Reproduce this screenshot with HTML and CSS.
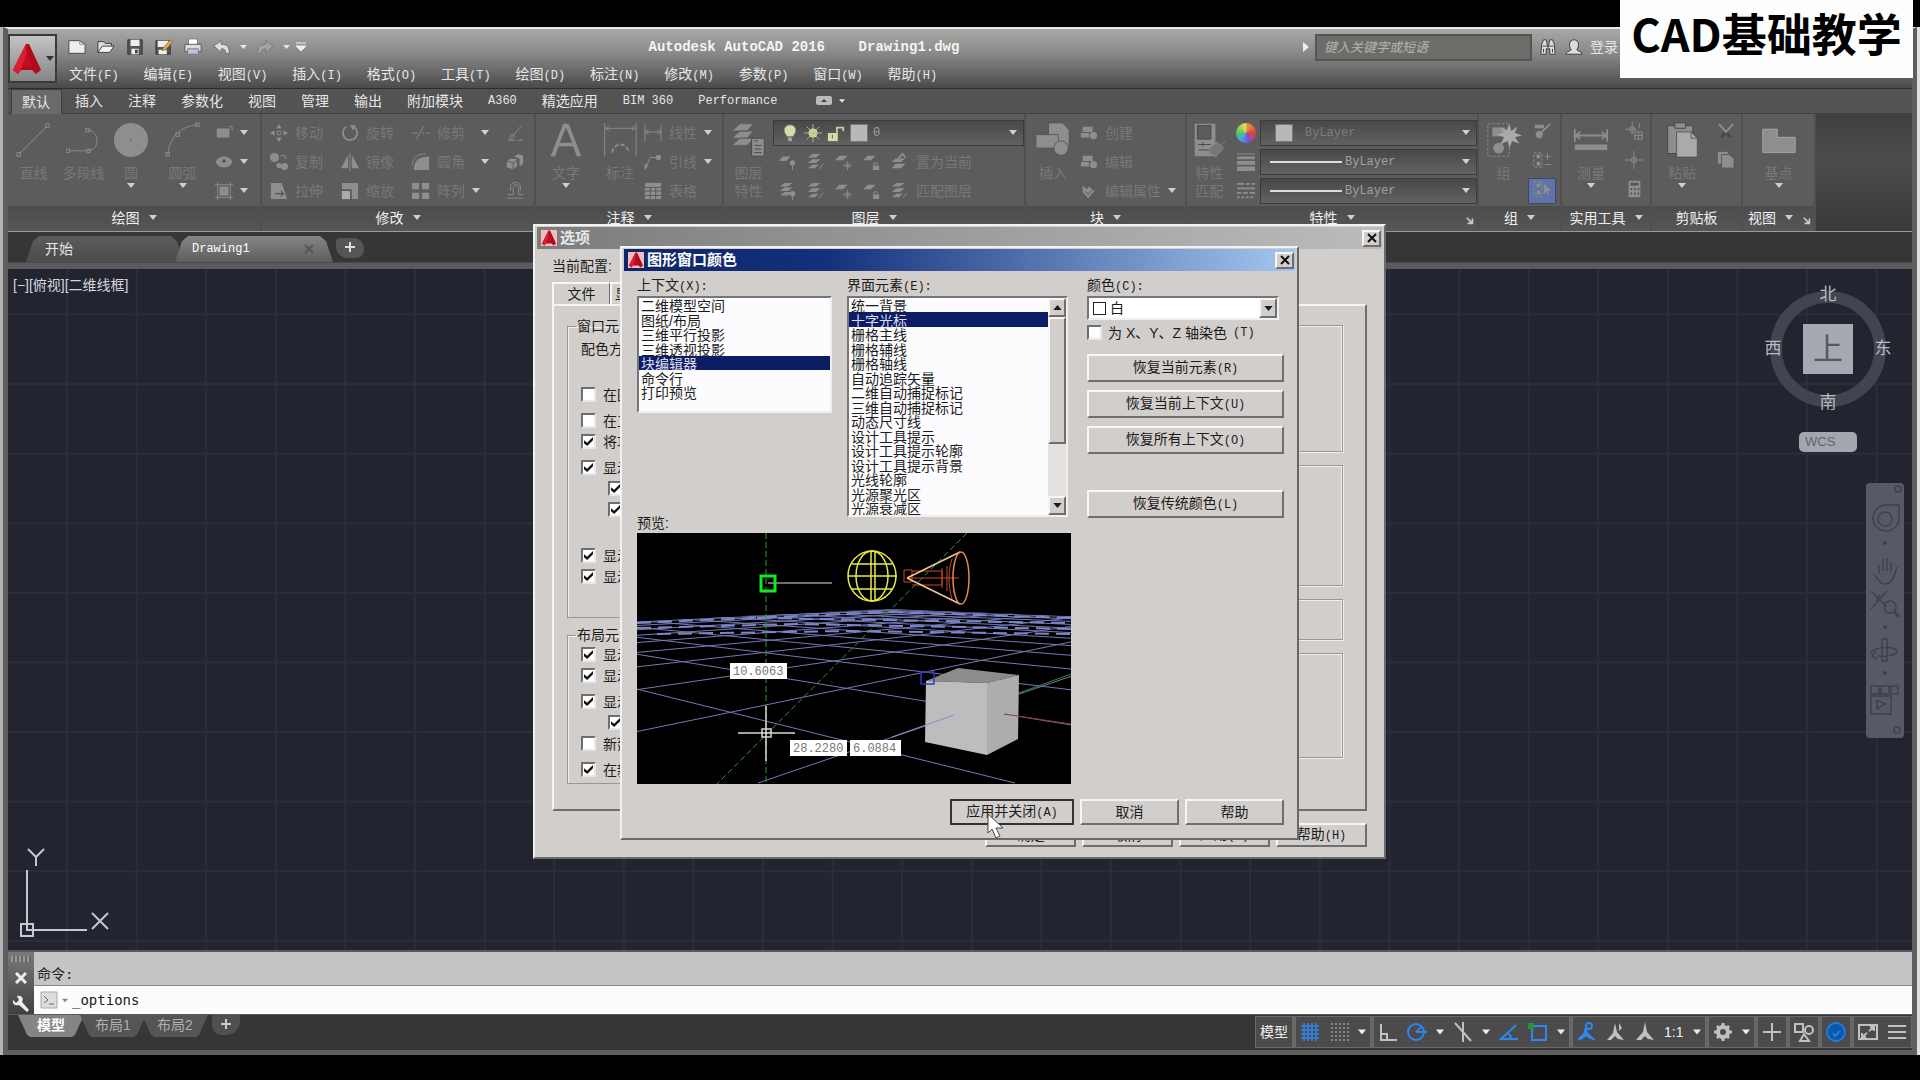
FILE: index.html
```html
<!DOCTYPE html>
<html lang="zh-CN">

<head>
    <meta charset="UTF-8">
    <meta name="viewport" content="width=device-width, initial-scale=1.0">
    <title>Autodesk AutoCAD 2016 - Drawing1.dwg</title>
    <link rel="stylesheet" href="styles.css">
</head>

<body>
    <!-- icon sprite -->
    <svg class="sprite" aria-hidden="true">
        <symbol id="down" viewBox="0 0 10 6"><path d="M0 0h10L5 6z" fill="currentColor"/></symbol>
        <symbol id="logo" viewBox="0 0 30 32"><path d="M14 1L1 27l5 4 3-4h11l4 4 5-4L17 1z" fill="#b3091d"/><path d="M14 1L1 27l5 4 9-14z" fill="#d81f34"/><path d="M15 9l-5 14h10z" fill="#c10e22"/></symbol>
        <symbol id="new" viewBox="0 0 20 20"><path d="M1 3h12l6 4v10H1z" fill="#eee" stroke="#444"/><path d="M13 3v4h6" fill="none" stroke="#888"/></symbol>
        <symbol id="open" viewBox="0 0 20 20"><path d="M1 16V4h6l2 2h7v3" fill="#ddd" stroke="#333"/><path d="M1 16l5-7h13l-5 7z" fill="#f4f4f4" stroke="#333"/></symbol>
        <symbol id="save" viewBox="0 0 20 20"><path d="M2 2h16v16H2z" fill="#555" stroke="#333"/><path d="M5 2h10v7H5zM6 12h8v6H6z" fill="#eee"/><path d="M10 13h3v4h-3z" fill="#444"/></symbol>
        <symbol id="saveas" viewBox="0 0 20 20"><path d="M1 3h16v15H1z" fill="#555" stroke="#333"/><path d="M3 3h12v7H3zM4 13h9v5H4z" fill="#eee"/><path d="M9 11l8-9 3 2-8 9-4 1z" fill="#e9a645" stroke="#555" stroke-width=".6"/></symbol>
        <symbol id="print" viewBox="0 0 20 20"><path d="M5 1h10v7H5z" fill="#fff" stroke="#777"/><path d="M1 7h18v8H1z" fill="#ddd" stroke="#555"/><path d="M4 12h12v6H4z" fill="#bcc4dd" stroke="#777"/></symbol>
        <symbol id="undo" viewBox="0 0 20 20"><path d="M1 9l8-6v4c7 0 9 3 9 10h-4c0-4-1-5-5-5v4z" fill="#ddd" stroke="#555" stroke-width=".7"/></symbol>
        <symbol id="redo" viewBox="0 0 20 20"><path d="M19 9l-8-6v4c-7 0-9 3-9 10h4c0-4 1-5 5-5v4z" fill="#a4a4a4" stroke="#6a6a6a" stroke-width=".7"/></symbol>
        <symbol id="more" viewBox="0 0 10 10"><path d="M0 1h10M0 4h10L5 9z" fill="#eee" stroke="#eee"/></symbol>
        <symbol id="find" viewBox="0 0 20 20"><path d="M3 7l2-5h3l1 5v3h2V7l1-5h3l2 5 1 11h-6v-6H8v6H2z" fill="#ddd" stroke="#333"/><path d="M4 9h4M12 9h4M5 12v4M15 12v4" stroke="#333" fill="none"/></symbol>
        <symbol id="user" viewBox="0 0 20 20"><path d="M1 18c0-3 4-3 6-5-3-3-3-11 3-11s6 8 3 11c2 2 6 2 6 5z" fill="#ddd" stroke="#333"/></symbol>
        <symbol id="panelbox" viewBox="0 0 18 12"><rect x="1" y="1" width="16" height="9" rx="2" fill="#bbb"/><path d="M6 7l3-3 3 3z" fill="#444"/></symbol>

        <symbol id="line" viewBox="0 0 40 40"><path d="M4 35L34 5" class="s"/><path d="M1 34h4v4H1zM33 2h4v4h-4z" class="s"/></symbol>
        <symbol id="pline" viewBox="0 0 40 40"><path d="M4 32h20c14 0 14-22 0-23" class="s"/><path d="M0 30h4v4H0zM23 30h4v4h-4zM22 7h4v4h-4z" class="s"/></symbol>
        <symbol id="circle" viewBox="0 0 40 40"><circle cx="20" cy="20" r="19" class="f"/><path d="M18 20h4M20 18v4" stroke="#777"/></symbol>
        <symbol id="arc" viewBox="0 0 40 40"><path d="M3 36C6 16 16 5 37 3" class="s"/><path d="M1 34h4v4H1zM12 12h4v4h-4zM34 1h4v4h-4z" class="s"/></symbol>
        <symbol id="rect" viewBox="0 0 20 20"><path d="M2 5h14v10H2z" class="f"/><path d="M15 3h4v4" class="s"/></symbol>
        <symbol id="ellipse" viewBox="0 0 20 20"><ellipse cx="10" cy="10" rx="9" ry="6" class="f"/><circle cx="10" cy="9" r="2" fill="#555"/></symbol>
        <symbol id="hatch" viewBox="0 0 20 20"><path d="M5 5h10v10H5z" class="f"/><path d="M0 3h20M0 17h20M3 0v20M17 0v20" class="s"/></symbol>
        <symbol id="move" viewBox="0 0 20 20"><path d="M10 0l3 5H7zM10 20l3-5H7zM0 10l5 3V7zM20 10l-5 3V7z" class="f"/><path d="M8 8h4v4H8z" class="s"/></symbol>
        <symbol id="rotate" viewBox="0 0 20 20"><path d="M6 3a8 8 0 1 0 8 0" class="s w"/><path d="M10 1l7 1-4 5z" class="f"/></symbol>
        <symbol id="trim" viewBox="0 0 20 20"><path d="M0 10h6M11 10h3M16 10h4M5 17L13 2" class="s"/></symbol>
        <symbol id="copy" viewBox="0 0 20 20"><circle cx="5" cy="5" r="5" class="f"/><circle cx="10" cy="14" r="3" class="f"/><circle cx="16" cy="15" r="4" class="f"/><path d="M12 3h5v4" class="s"/></symbol>
        <symbol id="mirror" viewBox="0 0 20 20"><path d="M8 2v15H0zM12 2v15h8z" class="f"/><path d="M10 0v20" class="s"/></symbol>
        <symbol id="fillet" viewBox="0 0 20 20"><path d="M2 19C2 8 8 4 19 4v15z" class="f"/><path d="M0 14C1 5 6 1 15 1" class="s"/></symbol>
        <symbol id="stretch" viewBox="0 0 20 20"><path d="M1 1h12l6 18H1z" class="f"/><path d="M6 13h9M12 10l3 3-3 3" stroke="#333" fill="none"/></symbol>
        <symbol id="scale" viewBox="0 0 20 20"><path d="M1 1h18v18h-7V8H1z" class="f"/><path d="M1 10h9v9H1z" fill="#aaa"/></symbol>
        <symbol id="array" viewBox="0 0 20 20"><path d="M0 1h8v7H0zM11 1h8v7h-8zM0 12h8v7H0zM11 12h8v7h-8z" class="f"/></symbol>
        <symbol id="erase" viewBox="0 0 20 20"><path d="M7 14L17 2M2 18h8M12 18h7M7 11l3 3-3 3-3-2z" class="s"/></symbol>
        <symbol id="explode" viewBox="0 0 20 20"><path d="M1 9l4-3 7 1v8l-4 3-7-2zM9 4l5-3 5 2v9l-4 3V6z" class="f"/><path d="M1 9l7 2v7M8 11l4-3" stroke="#555" fill="none"/></symbol>
        <symbol id="offset" viewBox="0 0 20 20"><path d="M1 18h18M2 14h6V6c0-4 6-4 6 0v8h5M5 10V5c0-6 11-6 11 0v5" class="s"/></symbol>
        <symbol id="bigA" viewBox="0 0 40 40"><path d="M3 38L17 2h6l14 36h-5l-4-11H12L8 38zm10-15h14L20 6z" class="f"/></symbol>
        <symbol id="dim" viewBox="0 0 40 40"><path d="M3 1v37M38 1v37M4 7h33M8 4L4 7l4 3M33 4l4 3-4 3" class="s"/><path d="M11 34c3-12 16-12 19 0" class="s w" stroke-dasharray="5 2"/></symbol>
        <symbol id="linear" viewBox="0 0 20 20"><path d="M1 1v18M19 1v18M1 9h18M5 6L1 9l4 3M15 6l4 3-4 3" class="s"/></symbol>
        <symbol id="leader" viewBox="0 0 20 20"><path d="M1 18l6-13h7" class="s"/><circle cx="16" cy="5" r="3" class="f"/><path d="M0 19l1-7 4 2z" class="f"/></symbol>
        <symbol id="grid" viewBox="0 0 20 20"><path d="M1 1h18v18H1z" class="f"/><path d="M1 6h18M1 10h18M1 15h18M7 6v13M13 6v13" stroke="#555" fill="none"/></symbol>
        <symbol id="layers" viewBox="0 0 40 40"><path d="M10 2h15l-7 8H1zM10 10h15l-7 8H1zM10 18h15l-7 8H1z" class="f" stroke="#5c5c5c"/><path d="M23 18h14v20H23z" class="f" stroke="#444"/><path d="M26 21h4M26 26h8M26 30h8M26 34h8" stroke="#444"/></symbol>
        <symbol id="lay1" viewBox="0 0 20 20"><path d="M4 4h9l-5 5H0z" class="f"/><circle cx="15" cy="11" r="3" class="f"/><path d="M15 13v6" class="s"/></symbol>
        <symbol id="lay2" viewBox="0 0 20 20"><path d="M6 1h9l-5 4H1zM6 7h9l-5 4H1zM6 13h7l-4 4H1z" class="f"/><path d="M13 18l5-6" class="s"/></symbol>
        <symbol id="lay3" viewBox="0 0 20 20"><path d="M5 3h9l-5 5H0z" class="f"/><path d="M14 9v10M9 14h10M11 11l6 6M17 11l-6 6" class="s"/></symbol>
        <symbol id="lay4" viewBox="0 0 20 20"><path d="M5 3h9l-5 5H0zM11 14h7v5h-7z" class="f"/><path d="M12 14v-3h4v3" class="s"/></symbol>
        <symbol id="lay5" viewBox="0 0 20 20"><path d="M6 1h9l-5 4H1zM6 6h9l-5 4H1zM6 11h9l-5 4H1z" class="f"/><circle cx="15" cy="13" r="3" class="f"/><path d="M15 15v5" class="s"/></symbol>
        <symbol id="lay6" viewBox="0 0 20 20"><path d="M5 6h11l-5 4H1zM5 12h11l-5 5H1z" class="f"/><path d="M8 6l5-5 3 4" class="s w"/></symbol>
        <symbol id="bulb" viewBox="0 0 20 20"><path d="M7 14C1 7 4 1 10 1s9 6 3 13z" fill="#d9dba4" stroke="#888"/><path d="M8 15h4v4H8z" fill="#aaa"/></symbol>
        <symbol id="sun" viewBox="0 0 20 20"><circle cx="10" cy="10" r="5" fill="#d9dba4"/><path d="M10 0v20M0 10h20M3 3l14 14M17 3L3 17" stroke="#b9bb8a"/></symbol>
        <symbol id="lock" viewBox="0 0 20 20"><path d="M1 10h11v9H1z" fill="#d9dba4"/><path d="M11 10V4h7v4" fill="none" stroke="#c9c9a0" stroke-width="2"/><path d="M6 12v4" stroke="#555"/></symbol>
        <symbol id="insert" viewBox="0 0 40 40"><path d="M15 1h16l7 8v20H15z" class="f" stroke="#555"/><path d="M1 14h25v15H1z" class="f" stroke="#555"/><circle cx="29" cy="29" r="8" class="f" stroke="#555"/></symbol>
        <symbol id="block" viewBox="0 0 20 20"><path d="M3 3h11v6H3zM1 10h9v5H1z" class="f"/><circle cx="15" cy="13" r="4" class="f"/></symbol>
        <symbol id="attr" viewBox="0 0 20 20"><path d="M3 4l5 4 2-3 6 5-7 8-6-7z" class="f"/><path d="M6 10l3 4 7-8" stroke="#555" fill="none"/></symbol>
        <symbol id="match" viewBox="0 0 40 40"><path d="M3 2h23v36H3z" class="f"/><path d="M6 4h15v15H6z" fill="#5c5c5c" stroke="#444"/><path d="M7 25h14M7 31h14M12 22v5" stroke="#444"/><path d="M20 29l8-7 7 7-9 10-7-5zM32 26l5-5" fill="#777" stroke="#888"/></symbol>
        <symbol id="lweight" viewBox="0 0 20 20"><path d="M0 1h20" class="s"/><path d="M0 4h20v3H0zM0 9h20v4H0zM0 15h20v5H0z" class="f"/></symbol>
        <symbol id="ltype" viewBox="0 0 20 20"><path d="M0 2h8M10 2h4M16 2h4M0 7h20M0 12h5M7 12h5M14 12h6M0 17h3M5 17h3M10 17h3M15 17h3" class="s w"/></symbol>
        <symbol id="group" viewBox="0 0 40 40"><path d="M2 2h24v36H2z" class="s" stroke-dasharray="3 2"/><path d="M7 6h14v10H7z" class="f"/><circle cx="14" cy="29" r="6" class="f"/><path d="M26 2l2 8 7-5-3 7 8 3-8 2 5 7-8-3-3 8-2-8-8 4 4-8-8-3 8-2-4-6 7 3z" fill="#aaa"/></symbol>
        <symbol id="gedit" viewBox="0 0 20 20"><path d="M2 3h10v4H2z" class="f"/><circle cx="7" cy="14" r="4" class="f"/><path d="M10 11l9-9" class="s w"/></symbol>
        <symbol id="gplus" viewBox="0 0 20 20"><path d="M1 2h9v16H1z" class="s" stroke-dasharray="3 2"/><path d="M4 4h4v4H4zM4 12h4v4H4z" class="f"/><path d="M13 6h7M16 2v8M13 15h7" class="s"/></symbol>
        <symbol id="gsel" viewBox="0 0 20 20"><path d="M1 2h9v16H1z" class="s" stroke-dasharray="3 2"/><path d="M4 4h4v4H4zM4 12h4v4H4z" class="f"/><path d="M12 4v12l3-3 2 4 1-1-2-4h4z" class="f"/></symbol>
        <symbol id="measure" viewBox="0 0 40 40"><path d="M2 8v14M38 8v14M3 15h34M8 11l-5 4 5 4M32 11l5 4-5 4" class="s w"/><path d="M2 25h36v6H2z" class="f"/></symbol>
        <symbol id="point" viewBox="0 0 20 20"><path d="M10 0v20M0 10h20" class="s"/><circle cx="10" cy="10" r="3" class="s"/></symbol>
        <symbol id="qsel" viewBox="0 0 20 20"><path d="M8 0v14M0 8h13" class="s"/><circle cx="8" cy="8" r="3" class="s"/><path d="M11 11h8v8h-8zM15 11v8M11 15h8M16 1v6" class="s"/></symbol>
        <symbol id="calc" viewBox="0 0 20 20"><path d="M4 1h13v18H4z" class="f"/><path d="M6 3h9v3H6zM6 9h2v2H6zM10 9h2v2h-2zM14 9h2v2h-2zM6 14h2v2H6zM10 14h2v2h-2zM14 14h2v2h-2z" fill="#555"/></symbol>
        <symbol id="paste" viewBox="0 0 40 40"><path d="M4 4h28v31H4z" class="f" stroke="#444"/><path d="M12 1h12v6H12z" class="f" stroke="#444"/><path d="M14 11h16l7 7v21H14z" fill="#aaa" stroke="#555"/><path d="M30 11v7h7" fill="none" stroke="#555"/></symbol>
        <symbol id="cut" viewBox="0 0 20 20"><path d="M2 2l9 10M18 2L9 12" class="s w"/><path d="M11 12l4 5M9 12l-4 5" stroke="#484848" stroke-width="3"/></symbol>
        <symbol id="docs" viewBox="0 0 20 20"><path d="M1 1h11v13H1z" class="f"/><path d="M5 4h9l5 5v10H5z" class="f" stroke="#555"/></symbol>
        <symbol id="base" viewBox="0 0 40 40"><path d="M2 8h16v9h20v17H2z" class="f" stroke="#aaa"/></symbol>
        <symbol id="launch" viewBox="0 0 10 10"><path d="M1 1l7 7M8 2v6H2" fill="none" stroke="#ccc" stroke-width="2"/></symbol>
    </svg>

    <main class="app">
        <header class="titlebar">
            <button class="app-button" aria-label="应用程序菜单">
                <svg width="30" height="32"><use href="#logo"/></svg>
                <svg width="8" height="5"><use href="#down"/></svg>
            </button>
            <div class="title-rows">
                <div class="title-row">
                    <div class="quick">
                        <button aria-label="新建"><svg><use href="#new"/></svg></button>
                        <button aria-label="打开"><svg><use href="#open"/></svg></button>
                        <button aria-label="保存"><svg><use href="#save"/></svg></button>
                        <button aria-label="另存为"><svg><use href="#saveas"/></svg></button>
                        <button aria-label="打印"><svg><use href="#print"/></svg></button>
                        <button aria-label="放弃"><svg><use href="#undo"/></svg></button>
                        <button class="slim" aria-label="放弃列表"><svg><use href="#down"/></svg></button>
                        <button aria-label="重做"><svg><use href="#redo"/></svg></button>
                        <button class="slim" aria-label="重做列表"><svg><use href="#down"/></svg></button>
                        <button class="slim" aria-label="自定义"><svg class="tall"><use href="#more"/></svg></button>
                    </div>
                    <h1>Autodesk AutoCAD 2016    Drawing1.dwg</h1>
                    <div class="info">
                        <svg width="6" height="10"><path d="M0 0l6 5-6 5z" fill="#eee"/></svg>
                        <input type="text" placeholder="键入关键字或短语" aria-label="搜索">
                        <button aria-label="查找"><svg><use href="#find"/></svg></button>
                        <button><svg><use href="#user"/></svg>登录</button>
                    </div>
                </div>
                <nav class="menu">
                    <a href="#">文件<span>(F)</span></a>
                    <a href="#">编辑<span>(E)</span></a>
                    <a href="#">视图<span>(V)</span></a>
                    <a href="#">插入<span>(I)</span></a>
                    <a href="#">格式<span>(O)</span></a>
                    <a href="#">工具<span>(T)</span></a>
                    <a href="#">绘图<span>(D)</span></a>
                    <a href="#">标注<span>(N)</span></a>
                    <a href="#">修改<span>(M)</span></a>
                    <a href="#">参数<span>(P)</span></a>
                    <a href="#">窗口<span>(W)</span></a>
                    <a href="#">帮助<span>(H)</span></a>
                </nav>
            </div>
        </header>

        <nav class="ribbon-tabs">
            <a class="active" href="#">默认</a>
            <a href="#">插入</a>
            <a href="#">注释</a>
            <a href="#">参数化</a>
            <a href="#">视图</a>
            <a href="#">管理</a>
            <a href="#">输出</a>
            <a href="#">附加模块</a>
            <a href="#" class="latin">A360</a>
            <a href="#">精选应用</a>
            <a href="#" class="latin">BIM 360</a>
            <a href="#" class="latin">Performance</a>
            <button aria-label="最小化面板">
                <svg width="18" height="12"><use href="#panelbox"/></svg>
                <svg width="6" height="4"><use href="#down"/></svg>
            </button>
        </nav>

        <div class="ribbon">
            <section class="panel draw">
                <div class="panel-body">
                    <button class="big"><svg><use href="#line"/></svg>直线</button>
                    <button class="big"><svg><use href="#pline"/></svg>多段线</button>
                    <button class="big"><svg><use href="#circle"/></svg>圆<svg class="arrow"><use href="#down"/></svg></button>
                    <button class="big"><svg><use href="#arc"/></svg>圆弧<svg class="arrow"><use href="#down"/></svg></button>
                    <div class="stack">
                        <button class="cmd" aria-label="矩形"><svg><use href="#rect"/></svg><svg class="arrow"><use href="#down"/></svg></button>
                        <button class="cmd" aria-label="椭圆"><svg><use href="#ellipse"/></svg><svg class="arrow"><use href="#down"/></svg></button>
                        <button class="cmd" aria-label="图案填充"><svg><use href="#hatch"/></svg><svg class="arrow"><use href="#down"/></svg></button>
                    </div>
                </div>
                <h2>绘图<svg class="arrow"><use href="#down"/></svg></h2>
            </section>

            <section class="panel modify">
                <div class="panel-body">
                    <div class="stack">
                        <button class="cmd"><svg><use href="#move"/></svg>移动</button>
                        <button class="cmd"><svg><use href="#copy"/></svg>复制</button>
                        <button class="cmd"><svg><use href="#stretch"/></svg>拉伸</button>
                    </div>
                    <div class="stack">
                        <button class="cmd"><svg><use href="#rotate"/></svg>旋转</button>
                        <button class="cmd"><svg><use href="#mirror"/></svg>镜像</button>
                        <button class="cmd"><svg><use href="#scale"/></svg>缩放</button>
                    </div>
                    <div class="stack">
                        <button class="cmd wide"><svg><use href="#trim"/></svg>修剪<svg class="arrow"><use href="#down"/></svg></button>
                        <button class="cmd wide"><svg><use href="#fillet"/></svg>圆角<svg class="arrow"><use href="#down"/></svg></button>
                        <button class="cmd"><svg><use href="#array"/></svg>阵列<svg class="arrow"><use href="#down"/></svg></button>
                    </div>
                    <div class="stack">
                        <button class="cmd" aria-label="删除"><svg><use href="#erase"/></svg></button>
                        <button class="cmd" aria-label="分解"><svg><use href="#explode"/></svg></button>
                        <button class="cmd" aria-label="偏移"><svg><use href="#offset"/></svg></button>
                    </div>
                </div>
                <h2>修改<svg class="arrow"><use href="#down"/></svg></h2>
            </section>

            <section class="panel annotate">
                <div class="panel-body">
                    <button class="big"><svg><use href="#bigA"/></svg>文字<svg class="arrow"><use href="#down"/></svg></button>
                    <button class="big"><svg><use href="#dim"/></svg>标注</button>
                    <div class="stack">
                        <button class="cmd"><svg><use href="#linear"/></svg>线性<svg class="arrow"><use href="#down"/></svg></button>
                        <button class="cmd"><svg><use href="#leader"/></svg>引线<svg class="arrow"><use href="#down"/></svg></button>
                        <button class="cmd"><svg><use href="#grid"/></svg>表格</button>
                    </div>
                </div>
                <h2>注释<svg class="arrow"><use href="#down"/></svg></h2>
            </section>

            <section class="panel layer">
                <div class="panel-body">
                    <button class="big"><svg><use href="#layers"/></svg>图层<br>特性</button>
                    <div class="stack">
                        <div class="combo">
                            <svg><use href="#bulb"/></svg>
                            <svg><use href="#sun"/></svg>
                            <svg><use href="#lock"/></svg>
                            <i class="swatch"></i>
                            <select aria-label="图层"><option>0</option></select>
                            <svg class="arrow"><use href="#down"/></svg>
                        </div>
                        <div class="icon-row">
                            <button aria-label="关"><svg><use href="#lay1"/></svg></button>
                            <button aria-label="隔离"><svg><use href="#lay2"/></svg></button>
                            <button aria-label="冻结"><svg><use href="#lay3"/></svg></button>
                            <button aria-label="锁定"><svg><use href="#lay4"/></svg></button>
                            <button><svg><use href="#lay6"/></svg>置为当前</button>
                        </div>
                        <div class="icon-row">
                            <button aria-label="打开所有图层"><svg><use href="#lay5"/></svg></button>
                            <button aria-label="取消隔离"><svg><use href="#lay2"/></svg></button>
                            <button aria-label="解冻"><svg><use href="#lay3"/></svg></button>
                            <button aria-label="解锁"><svg><use href="#lay4"/></svg></button>
                            <button><svg><use href="#lay2"/></svg>匹配图层</button>
                        </div>
                    </div>
                </div>
                <h2>图层<svg class="arrow"><use href="#down"/></svg></h2>
            </section>

            <section class="panel block">
                <div class="panel-body">
                    <button class="big"><svg><use href="#insert"/></svg>插入</button>
                    <div class="stack">
                        <button class="cmd"><svg><use href="#block"/></svg>创建</button>
                        <button class="cmd"><svg><use href="#block"/></svg>编辑</button>
                        <button class="cmd"><svg><use href="#attr"/></svg>编辑属性<svg class="arrow"><use href="#down"/></svg></button>
                    </div>
                </div>
                <h2>块<svg class="arrow"><use href="#down"/></svg></h2>
            </section>

            <section class="panel props">
                <div class="panel-body">
                    <button class="big"><svg><use href="#match"/></svg>特性<br>匹配</button>
                    <div class="stack centered">
                        <i class="wheel"></i>
                        <svg><use href="#lweight"/></svg>
                        <svg><use href="#ltype"/></svg>
                    </div>
                    <div class="stack">
                        <div class="combo dim">
                            <i class="swatch"></i>
                            <select aria-label="对象颜色"><option>ByLayer</option></select>
                            <svg class="arrow"><use href="#down"/></svg>
                        </div>
                        <div class="combo">
                            <i class="rule"></i>
                            <select aria-label="线宽"><option>ByLayer</option></select>
                            <svg class="arrow"><use href="#down"/></svg>
                        </div>
                        <div class="combo">
                            <i class="rule"></i>
                            <select aria-label="线型"><option>ByLayer</option></select>
                            <svg class="arrow"><use href="#down"/></svg>
                        </div>
                    </div>
                </div>
                <h2>特性<svg class="arrow"><use href="#down"/></svg><svg class="launch"><use href="#launch"/></svg></h2>
            </section>

            <section class="panel groups">
                <div class="panel-body">
                    <button class="big"><svg><use href="#group"/></svg>组</button>
                    <div class="stack centered">
                        <button aria-label="解除编组"><svg><use href="#gedit"/></svg></button>
                        <button aria-label="组编辑"><svg><use href="#gplus"/></svg></button>
                        <button class="pressed" aria-label="启用组选择"><svg><use href="#gsel"/></svg></button>
                    </div>
                </div>
                <h2>组<svg class="arrow"><use href="#down"/></svg></h2>
            </section>

            <section class="panel utils">
                <div class="panel-body">
                    <button class="big"><svg><use href="#measure"/></svg>测量<svg class="arrow"><use href="#down"/></svg></button>
                    <div class="stack centered">
                        <button aria-label="快速选择"><svg><use href="#qsel"/></svg></button>
                        <button aria-label="点坐标"><svg><use href="#point"/></svg></button>
                        <button aria-label="计算器"><svg><use href="#calc"/></svg></button>
                    </div>
                </div>
                <h2>实用工具<svg class="arrow"><use href="#down"/></svg></h2>
            </section>

            <section class="panel clip">
                <div class="panel-body">
                    <button class="big"><svg><use href="#paste"/></svg>粘贴<svg class="arrow"><use href="#down"/></svg></button>
                    <div class="stack centered">
                        <button aria-label="剪切"><svg><use href="#cut"/></svg></button>
                        <button aria-label="复制到剪贴板"><svg><use href="#docs"/></svg></button>
                    </div>
                </div>
                <h2>剪贴板</h2>
            </section>

            <section class="panel view">
                <div class="panel-body">
                    <button class="big"><svg><use href="#base"/></svg>基点<svg class="arrow"><use href="#down"/></svg></button>
                </div>
                <h2>视图<svg class="arrow"><use href="#down"/></svg><svg class="launch"><use href="#launch"/></svg></h2>
            </section>
        </div>

        <nav class="file-tabs">
            <a href="#">开始</a>
            <a href="#" class="active latin">Drawing1<svg width="10" height="10"><path d="M1 1l8 8M9 1L1 9" stroke="#555" stroke-width="2"/></svg></a>
            <button aria-label="新图形"><svg width="12" height="12"><path d="M6 1v10M1 6h10" stroke="#ddd" stroke-width="2"/></svg></button>
        </nav>

        <div class="canvas">
            <svg class="canvas-grid" aria-hidden="true">
                <defs>
                    <pattern id="cells" x="58" y="44.5" width="69.6" height="69.6" patternUnits="userSpaceOnUse">
                        <path d="M0 1h70M1 0v70" stroke="#2b2e3a" stroke-width="2" fill="none"/>
                    </pattern>
                </defs>
                <rect width="100%" height="100%" fill="url(#cells)"/>
            </svg>
            <p class="view-label">[−][俯视][二维线框]</p>

            <svg class="ucs" width="112" height="112" viewBox="0 0 112 112" aria-hidden="true">
                <g fill="none" stroke="#c6c8d0" stroke-width="2"><path d="M17 30v60h60"/><path d="M11 84h12v12H11z"/><path d="M18 9l8 8 8-8M26 17v9M82 73l16 16M98 73L82 89"/></g>
            </svg>

            <div class="viewcube">
                <span class="north">北</span>
                <span class="west">西</span>
                <button>上</button>
                <span class="east">东</span>
                <span class="south">南</span>
            </div>
            <button class="wcs">WCS</button>

            <div class="navbar">
                <svg width="38" height="254" viewBox="0 0 38 254">
                    <g fill="none" stroke="#3f424c" stroke-width="1.5">
                        <circle cx="32" cy="6" r="3"/><path d="M20 22h13v14a13 13 0 1 1-13-14z"/><circle cx="19" cy="36" r="7"/>
                        <path d="M8 91l5 7c5 6 13 2 15-5l3-9M13 91v-9M17 88V76M21 88V75M25 89V79"/>
                        <path d="M5 108l16 16M21 108L5 126M14 112l-4 6"/><circle cx="24" cy="124" r="6"/><path d="M28 128l5 6" stroke-width="3"/>
                        <path d="M16 156h5v22h-5zM5 171c0-8 25-8 26-3s-16 6-20 5M10 168l-4 5 5 3"/>
                        <path d="M5 203h8v8H5zM15 203h8v8h-8zM25 203h7v8h-7zM5 213h20v18H5zM11 217v9l8-5z"/><circle cx="31" cy="247" r="3"/>
                    </g>
                    <g fill="#3f424c"><circle cx="19" cy="60" r="2"/><circle cx="19" cy="144" r="2"/><circle cx="19" cy="190" r="2"/></g>
                </svg>
            </div>
        </div>

        <div class="command">
            <div class="command-side">
                <i class="grip"></i>
                <button aria-label="关闭"><svg width="12" height="12" viewBox="0 0 12 12"><path d="M1 1l10 10M11 1L1 11" stroke="#eee" stroke-width="3"/></svg></button>
                <button aria-label="自定义"><svg width="18" height="18" viewBox="0 0 18 18"><path d="M1 5l3 3 3-3-2-4c5-1 7 3 5 6l7 8-2 2-8-7c-4 1-7-1-6-5z" fill="#eee"/></svg></button>
            </div>
            <div class="command-main">
                <p>命令:</p>
                <label>
                    <svg width="18" height="18" viewBox="0 0 18 18"><path d="M1 1h16v16H1z" fill="#ddd" stroke="#aaa"/><path d="M4 5l4 4-4 3M9 13h5" fill="none" stroke="#666"/></svg>
                    <svg width="6" height="5" class="grey"><use href="#down"/></svg>
                    <input type="text" value="_options" aria-label="命令行">
                </label>
            </div>
        </div>

        <footer class="bottom">
            <nav class="layout-tabs">
                <a href="#" class="active">模型</a>
                <a href="#">布局1</a>
                <a href="#">布局2</a>
                <button aria-label="新布局"><svg width="12" height="12"><path d="M6 1v10M1 6h10" stroke="#ccc" stroke-width="2"/></svg></button>
            </nav>
            <div class="status">
                <div><button>模型</button></div>
                <div>
                    <button aria-label="栅格"><svg class="on" viewBox="0 0 20 20"><path d="M4 1v18M8 1v18M12 1v18M16 1v18M1 4h18M1 8h18M1 12h18M1 16h18" stroke="currentColor" stroke-width="1.5"/></svg></button>
                    <button aria-label="捕捉"><svg viewBox="0 0 20 20"><path d="M2 2h18M2 6h18M2 10h18M2 14h18M2 18h18" stroke="currentColor" stroke-dasharray="2 2"/></svg></button>
                    <button class="slim" aria-label="捕捉设置"><svg><use href="#down"/></svg></button>
                </div>
                <div>
                    <button aria-label="正交"><svg viewBox="0 0 20 20"><path d="M3 2v16h16M3 12h6v6" fill="none" stroke="currentColor" stroke-width="2"/></svg></button>
                    <button aria-label="极轴"><svg class="on" viewBox="0 0 20 20"><circle cx="9" cy="10" r="8" fill="none" stroke="currentColor" stroke-width="2"/><path d="M9 10h11M9 10l5-5" stroke="currentColor" stroke-width="2"/></svg></button>
                    <button class="slim" aria-label="极轴设置"><svg><use href="#down"/></svg></button>
                    <button aria-label="等轴测"><svg viewBox="0 0 20 20"><path d="M2 1l16 18M10 0v20" stroke="currentColor" stroke-width="2"/></svg></button>
                    <button class="slim" aria-label="等轴测设置"><svg><use href="#down"/></svg></button>
                    <button aria-label="对象追踪"><svg class="on" viewBox="0 0 20 20"><path d="M17 3L2 17h17M8 11c3 1 4 3 4 6" fill="none" stroke="currentColor" stroke-width="2"/></svg></button>
                    <button aria-label="对象捕捉"><svg class="on" viewBox="0 0 20 20"><path d="M4 4h14v14H4z" fill="none" stroke="currentColor" stroke-width="2"/><path d="M0 1h6v6H0z" fill="#1c9a2c"/></svg></button>
                    <button class="slim" aria-label="对象捕捉设置"><svg><use href="#down"/></svg></button>
                </div>
                <div>
                    <button aria-label="注释可见性"><svg class="on" viewBox="0 0 20 20"><path d="M9 3l1 7 8 8-6-2-3-2-6 4-2-1 6-6z" fill="currentColor" stroke="currentColor"/><circle cx="12" cy="4" r="3" fill="none" stroke="currentColor" stroke-width="2"/></svg></button>
                    <button aria-label="自动缩放"><svg viewBox="0 0 20 20"><path d="M9 1l2 9 7 8-6-1-3-3-4 4-4 0 6-7zM13 1l3 5-3 3z" fill="currentColor"/></svg></button>
                    <button aria-label="注释比例"><svg viewBox="0 0 20 20"><path d="M10 0l2 10 7 8-6-1-3-3-4 4-5 0 7-8z" fill="currentColor"/></svg></button>
                    <button class="scale">1:1</button>
                    <button class="slim" aria-label="比例列表"><svg><use href="#down"/></svg></button>
                </div>
                <div>
                    <button aria-label="切换工作空间"><svg viewBox="0 0 20 20"><circle cx="10" cy="10" r="5" fill="none" stroke="currentColor" stroke-width="4"/><path d="M10 1v4M10 15v4M1 10h4M15 10h4M4 4l2 2M14 14l2 2M16 4l-2 2M6 14l-2 2" stroke="currentColor" stroke-width="3"/></svg></button>
                    <button class="slim" aria-label="工作空间列表"><svg><use href="#down"/></svg></button>
                </div>
                <div><button aria-label="注释监视器"><svg viewBox="0 0 20 20"><path d="M10 1v18M1 10h18" stroke="currentColor" stroke-width="2"/></svg></button></div>
                <div><button aria-label="隔离对象"><svg viewBox="0 0 20 20"><path d="M1 2h8v8H1zM10 12l5 7H6z" fill="none" stroke="currentColor" stroke-width="2"/><circle cx="15" cy="8" r="4" fill="none" stroke="currentColor" stroke-width="2"/></svg></button></div>
                <div><button aria-label="硬件加速"><svg class="on" viewBox="0 0 20 20"><circle cx="10" cy="10" r="9" fill="#0d58a8" stroke="#1f7be0" stroke-width="2"/><path d="M7 11l2 3 5-5" fill="none" stroke="#1f8bf0" stroke-width="1.5"/></svg></button></div>
                <div>
                    <button aria-label="全屏显示"><svg viewBox="0 0 20 20"><path d="M1 3h18v14H1zM11 9l5-4M16 9V5h-4M9 11l-5 4M4 11v4h4" fill="none" stroke="currentColor" stroke-width="2"/></svg></button>
                    <button aria-label="自定义"><svg viewBox="0 0 20 20"><path d="M1 4h18M1 10h18M1 16h18" stroke="currentColor" stroke-width="2"/></svg></button>
                </div>
            </div>
        </footer>
    </main>

    <!-- options dialog, mostly behind the colour dialog -->
    <section class="dialog options">
        <div class="dialog-title">
            <svg><use href="#logo"/></svg>
            <h2>选项</h2>
            <button aria-label="关闭"><svg viewBox="0 0 12 12"><path d="M2 2l8 8M10 2l-8 8" stroke="#111" stroke-width="2"/></svg></button>
        </div>
        <p class="profile">当前配置:</p>
        <div class="tab-heads"><button>文件</button><button class="active">显</button></div>
        <div class="tab-page">
            <div class="tab-column">
                <fieldset class="tall">
                    <legend>窗口元素</legend>
                    <p>配色方案</p>
                    <label class="section"><input type="checkbox">在图</label>
                    <label class="spaced"><input type="checkbox">在工</label>
                    <label><input type="checkbox" checked>将功</label>
                    <label class="spaced"><input type="checkbox" checked>显示</label>
                    <label class="indent"><input type="checkbox" checked></label>
                    <label class="indent"><input type="checkbox" checked></label>
                    <label class="section"><input type="checkbox" checked>显示</label>
                    <label><input type="checkbox" checked>显示</label>
                </fieldset>
                <fieldset>
                    <legend>布局元素</legend>
                    <label><input type="checkbox" checked>显示</label>
                    <label><input type="checkbox" checked>显示</label>
                    <label class="spaced"><input type="checkbox" checked>显示</label>
                    <label class="indent"><input type="checkbox" checked></label>
                    <label><input type="checkbox">新建</label>
                    <label class="spaced"><input type="checkbox" checked>在新</label>
                </fieldset>
            </div>
            <div class="boxes"><i></i><i></i><i></i><i></i></div>
        </div>
        <div class="dialog-actions">
            <button>确定</button>
            <button>取消</button>
            <button>应用<span>(A)</span></button>
            <button>帮助<span>(H)</span></button>
        </div>
    </section>

    <section class="dialog colors">
        <div class="dialog-title">
            <svg><use href="#logo"/></svg>
            <h2>图形窗口颜色</h2>
            <button aria-label="关闭"><svg viewBox="0 0 12 12"><path d="M2 2l8 8M10 2l-8 8" stroke="#111" stroke-width="2"/></svg></button>
        </div>
        <div class="color-form">
            <div class="lists">
                <div>
                    <label for="context">上下文<span>(X):</span></label>
                    <select id="context" class="context" size="7">
                        <option>二维模型空间</option>
                        <option>图纸/布局</option>
                        <option>三维平行投影</option>
                        <option>三维透视投影</option>
                        <option selected>块编辑器</option>
                        <option>命令行</option>
                        <option>打印预览</option>
                    </select>
                </div>
                <div>
                    <label for="element">界面元素<span>(E):</span></label>
                    <div class="scroll-list">
                        <select id="element" size="15">
                            <option>统一背景</option>
                            <option selected>十字光标</option>
                            <option>栅格主线</option>
                            <option>栅格辅线</option>
                            <option>栅格轴线</option>
                            <option>自动追踪矢量</option>
                            <option>二维自动捕捉标记</option>
                            <option>三维自动捕捉标记</option>
                            <option>动态尺寸线</option>
                            <option>设计工具提示</option>
                            <option>设计工具提示轮廓</option>
                            <option>设计工具提示背景</option>
                            <option>光线轮廓</option>
                            <option>光源聚光区</option>
                            <option>光源衰减区</option>
                        </select>
                        <div class="scrollbar">
                            <button aria-label="向上"><svg class="flip"><use href="#down"/></svg></button>
                            <i></i>
                            <button aria-label="向下"><svg><use href="#down"/></svg></button>
                        </div>
                    </div>
                </div>
            </div>
            <div class="color-side">
                <label for="color">颜色<span>(C):</span></label>
                <div class="color-combo">
                    <i></i>
                    <select id="color"><option>白</option></select>
                    <b><svg><use href="#down"/></svg></b>
                </div>
                <label class="tint"><input type="checkbox">为 X、Y、Z 轴染色<span>(T)</span></label>
                <button>恢复当前元素<span>(R)</span></button>
                <button>恢复当前上下文<span>(U)</span></button>
                <button>恢复所有上下文<span>(O)</span></button>
                <button class="legacy">恢复传统颜色<span>(L)</span></button>
            </div>
        </div>
        <div class="preview">
            <p>预览:</p>
            <svg viewBox="0 0 434 251">
                <clipPath id="ground"><path d="M0 88L250 76l184 7v168H0z"/></clipPath>
                <rect width="434" height="251" fill="#000"/>
                <g clip-path="url(#ground)" fill="none" stroke="#7479b4">
                    <path d="M121 250L690 56M-249 250L690 56M-640 250L690 56M-1030 250L690 56M-1420 250L690 56M-1810 250L690 56M-2200 250L690 56M-2590 250L690 56M-2980 250L690 56M-3370 250L690 56M-3760 250L690 56M-4150 250L690 56M-4540 250L690 56M-4930 250L690 56M-5320 250L690 56"/>
                    <path d="M378 250L-407 55M791 250L-407 55M1204 250L-407 55M1617 250L-407 55M2030 250L-407 55M2443 250L-407 55M2856 250L-407 55M3269 250L-407 55M3682 250L-407 55M4095 250L-407 55M4508 250L-407 55M4921 250L-407 55M5334 250L-407 55M5747 250L-407 55"/>
                    <path d="M0 90L250 79l184 6M120 85l314 5M0 95l160-4 274 5M20 101l190-3 224 3" stroke-dasharray="14 7" stroke-width="2" stroke="#7c86c8"/>
                </g>
                <g fill="none" stroke="#2f9a34" stroke-dasharray="6 3">
                    <path d="M129 0v251M330 0L80 251"/>
                </g>
                <path d="M131 50h64" stroke="#ddd"/>
                <path d="M124 43h14v15h-14z" fill="none" stroke="#12e81a" stroke-width="3"/>
                <g fill="none" stroke="#e6ea45" stroke-width="1.5">
                    <ellipse cx="235" cy="43" rx="24" ry="25"/><ellipse cx="235" cy="43" rx="16" ry="25"/><path d="M234 18v50M238 18v50M211 43h49M215 31h40M215 56h40"/>
                </g>
                <g fill="none" stroke="#c8491c">
                    <path d="M267 37h8v12h-8zM270 45h52M275 38h30v14h-30M305 35v20M310 33v25M315 26c-4 12-4 26 0 40"/>
                    <path d="M270 45l53-26M270 45l53 26" stroke="#eec9a0" stroke-width="1.5"/>
                    <ellipse cx="324" cy="45" rx="8" ry="26" stroke="#e88a4c" stroke-width="1.5"/>
                </g>
                <path d="M382 160l52-19" stroke="#2c8a35"/>
                <path d="M289 148l32-13 61 7-32 8z" fill="#8c8c8c"/>
                <path d="M289 148l61 2v72l-62-13z" fill="#bdbdbd"/>
                <path d="M382 142l-32 8v72l31-16z" fill="#adadad"/>
                <path d="M255 204l62-22" stroke="#8a8ac8"/>
                <path d="M367 181l67 10" stroke="#9a2f3f"/>
                <path d="M284 139h13v12h-13z" fill="none" stroke="#3038c0" stroke-width="1.5"/>
                <path d="M101 200h57M129 173v55M125 196h9v8h-9z" fill="none" stroke="#d8d8d8" stroke-width="1.5"/>
                <path d="M93 130h57v16H93zM153 207h57v16h-57zM213 207h51v16h-51z" fill="#fff"/>
                <g class="readout"><text x="96" y="142">10.6063</text><text x="156" y="219">28.2280</text><text x="216" y="219">6.0884</text></g>
            </svg>
        </div>
        <div class="dialog-actions">
            <button class="default">应用并关闭<span>(A)</span></button>
            <button>取消</button>
            <button>帮助</button>
        </div>
    </section>

    <div class="badge">CAD基础教学</div>
    <svg class="cursor" width="18" height="26" viewBox="0 0 18 26"><path d="M1 1v19l4-4 4 9 4-2-4-8h7z" fill="#fff" stroke="#444"/></svg>
</body>

</html>
```

FILE: styles.css
```css
* {
    margin: 0;
    padding: 0;
    box-sizing: border-box;
}

body {
    position: relative;
    min-height: 100vh;
    display: flex;
    flex-direction: column;
    padding: 27px 0 25px;
    background: #000;
    font-family: "Liberation Sans", "Noto Sans CJK SC", sans-serif;
    font-size: 14px;
    line-height: 18px;
    overflow: hidden;
}

button,
input,
select {
    font: inherit;
    color: inherit;
    background: none;
    border: none;
    border-radius: 0;
    outline: none;
}

a {
    color: inherit;
    text-decoration: none;
}

svg {
    flex: none;
}

.sprite {
    position: absolute;
    width: 0;
    height: 0;
}

.s {
    fill: none;
    stroke: currentColor;
}

.f {
    fill: currentColor;
}

.w {
    stroke-width: 2;
}

.latin,
.menu span,
.dialog span {
    font-family: "Liberation Mono", monospace;
    font-size: 12px;
}

/* main window */
.app {
    flex: 1;
    display: flex;
    flex-direction: column;
    margin: 0 3px;
    border: 5px solid #5e5e5e;
    border-top: 2px solid #e8e8e8;
    box-shadow: -3px 0 #b4b4b4, 3px 0 #e0e0e0;
    background: #363636;
    color: #e6e6e6;
}

.titlebar {
    display: flex;
    height: 60px;
    background: linear-gradient(#a8a8a6, #8a8a8a 40%, #4a4a4a);
    border-bottom: 1px solid #2c2c2c;
}

.app-button {
    width: 49px;
    height: 49px;
    margin-top: 5px;
    display: flex;
    align-items: center;
    justify-content: center;
    gap: 4px;
    color: #333;
    background: linear-gradient(#c4c4c4, #858585);
    border: 2px solid #3a3a3a;
}

.title-rows {
    flex: 1;
    padding: 4px 0 0 8px;
}

.title-row {
    display: flex;
    align-items: center;
    height: 28px;
}

.quick {
    display: flex;
    align-items: center;
    gap: 5px;
}

.quick button,
.info button {
    display: flex;
    align-items: center;
    gap: 6px;
}

.quick svg,
.info button svg {
    width: 20px;
    height: 18px;
}

.quick button {
    width: 24px;
    justify-content: center;
}

.quick .slim {
    width: 9px;
}

.quick .slim svg {
    width: 7px;
    height: 4px;
}

.quick .slim svg.tall {
    width: 10px;
    height: 10px;
}

.title-row h1 {
    margin: 0 auto;
    font-family: "Liberation Mono", monospace;
    font-size: 14px;
    white-space: pre;
    color: #f4f4f4;
}

.info {
    display: flex;
    align-items: center;
    gap: 6px;
    margin-right: 294px;
}

.info input {
    width: 217px;
    height: 27px;
    padding-left: 7px;
    font-size: 13px;
    font-style: italic;
    background: #6c6d68;
    border: 2px solid #555;
}

.info input::placeholder {
    color: #b4b4b0;
}

.menu {
    display: grid;
    grid-template-columns: repeat(12, 1fr);
    width: 897px;
    line-height: 26px;
    padding-left: 4px;
}

.ribbon-tabs {
    display: flex;
    align-items: center;
    height: 25px;
    background: #535353;
    border-bottom: 1px solid #404040;
}

.ribbon-tabs a {
    padding-right: 25px;
    line-height: 24px;
}

.ribbon-tabs .active {
    margin: 0 13px 0 3px;
    padding: 0 11px 0 10px;
    background: #6a6a6a;
    border: 1px solid #3e3e3e;
    border-bottom: none;
}

.ribbon-tabs button {
    display: flex;
    align-items: center;
    gap: 6px;
    margin-left: 13px;
}

/* ribbon */
.ribbon {
    display: flex;
    height: 118px;
    background: linear-gradient(#404040, #4c4c4c 40%, #3a3a3a);
    border-bottom: 1px solid #9a9a9a;
}

.panel {
    display: flex;
    flex-direction: column;
    border-right: 2px solid #505050;
    background: #5c5c5c;
    color: #787878;
}

.panel svg {
    color: #8e8e8e;
}

.draw { width: 254px; }
.modify { width: 274px; }
.annotate { width: 188px; }
.layer { width: 302px; }
.block { width: 161px; }
.props { width: 292px; }
.groups { width: 83px; }
.utils { width: 90px; }
.clip { width: 91px; }
.view { width: 73px; }

.panel-body {
    flex: 1;
    display: grid;
    align-items: start;
    padding-top: 4px;
    overflow: hidden;
}

.draw .panel-body { grid-template-columns: 51px 49px 46px 57px 47px; }
.modify .panel-body { grid-template-columns: 71px 71px 94px 24px; padding-left: 8px; }
.annotate .panel-body { grid-template-columns: 60px 48px 74px; }
.layer .panel-body { grid-template-columns: 49px 1fr; }
.block .panel-body { grid-template-columns: 54px 102px; }
.props .panel-body { grid-template-columns: 45px 28px 1fr; }
.groups .panel-body { grid-template-columns: 49px 28px; }
.utils .panel-body { grid-template-columns: 58px 28px; }
.clip .panel-body { grid-template-columns: 60px 28px; }

.big {
    display: block;
    padding-top: 4px;
    text-align: center;
}

.big svg {
    display: block;
    width: 36px;
    height: 36px;
    margin: 0 auto 6px;
}

.panel svg.arrow {
    width: 8px;
    height: 5px;
    color: #d0d0d0;
}

.big svg.arrow {
    margin: 1px auto 0;
}

.stack {
    display: grid;
    grid-auto-rows: 29px;
    align-content: start;
    align-items: center;
}

.stack svg {
    width: 18px;
    height: 18px;
}

.draw .stack {
    padding-left: 4px;
}

.centered {
    justify-items: center;
}

.cmd {
    display: flex;
    align-items: center;
    gap: 7px;
}

.cmd.wide .arrow {
    margin-left: 9px;
}

.icon-row {
    display: flex;
    gap: 10px;
    padding-left: 6px;
}

.icon-row button {
    display: flex;
    align-items: center;
    gap: 7px;
}

.combo {
    display: flex;
    align-items: center;
    gap: 10px;
    height: 26px;
    padding: 0 6px 0 7px;
    background: linear-gradient(#484848, #626262);
    border: 1px solid #3c3c3c;
    color: #a0a0a0;
}

.layer .combo {
    gap: 5px;
}

.combo select {
    flex: 1;
    min-width: 0;
    appearance: none;
    font-family: "Liberation Mono", monospace;
    font-size: 12px;
}

.swatch {
    width: 18px;
    height: 18px;
    background: #b8b8b8;
    border: 1px solid #777;
}

.props .combo {
    gap: 3px;
    padding-left: 9px;
}

.props .swatch {
    margin: 0 9px 0 5px;
}

.combo.dim {
    color: #7c7c7c;
}

.combo .rule {
    width: 72px;
    height: 2px;
    background: #dcdcdc;
}

.wheel {
    width: 20px;
    height: 20px;
    border-radius: 50%;
    background: conic-gradient(#f4a03c, #e04040 25%, #7a50d8 45%, #48a0e8 60%, #50c860 75%, #e8e060);
}

.panel .pressed {
    width: 28px;
    height: 26px;
    background: #5f74a4;
    border: 1px solid #3b4870;
}

.panel h2 {
    position: relative;
    height: 25px;
    display: flex;
    align-items: center;
    justify-content: center;
    gap: 9px;
    padding-bottom: 2px;
    background: linear-gradient(#4c4c4c, #565656);
    color: #f0f0f0;
    font-size: 14px;
    font-weight: normal;
    white-space: nowrap;
}

.panel h2 .launch {
    position: absolute;
    right: 3px;
    bottom: 6px;
    width: 8px;
    height: 8px;
}

.view h2 {
    justify-content: flex-start;
    padding-left: 5px;
}

/* drawing tabs */
.file-tabs {
    display: flex;
    align-items: flex-end;
    height: 31px;
    padding-left: 18px;
    border-bottom: 1px solid #4a4a4a;
}

.file-tabs a {
    width: 158px;
    height: 26px;
    padding-left: 19px;
    line-height: 26px;
    background: linear-gradient(#5c5c5c, #4b4b4b);
    clip-path: polygon(0 100%, 7px 20%, 13px 0, 145px 0, 151px 20%, 100% 100%);
}

.file-tabs .active {
    display: flex;
    align-items: center;
    justify-content: space-between;
    margin-left: -9px;
    padding-left: 17px;
    padding-right: 19px;
    color: #fff;
    background: linear-gradient(#858585, #5e5e5e);
}

.file-tabs button {
    width: 28px;
    height: 20px;
    margin: 0 0 4px 3px;
    background: #555;
    border-radius: 4px 10px 8px 12px;
}

/* model space */
.canvas {
    position: relative;
    flex: 1;
    min-height: 300px;
    border: 0 solid #5a5a5a;
    border-width: 6px 0 2px;
    background: #222430;
}

.canvas-grid {
    position: absolute;
    width: 100%;
    height: 100%;
}

.view-label {
    position: relative;
    padding: 7px 5px;
    color: #d4d4dc;
}

.ucs {
    position: absolute;
    left: 2px;
    bottom: -2px;
}

.viewcube {
    position: absolute;
    top: 12px;
    right: 8px;
    display: grid;
    grid-template-columns: 42px 68px 42px;
    grid-template-rows: 28px 80px 28px;
    place-items: center;
    color: #b8bac2;
    font-size: 17px;
}

.viewcube::before {
    content: "";
    position: absolute;
    left: 50%;
    top: 50%;
    box-sizing: border-box;
    width: 116px;
    height: 116px;
    margin: -58px;
    border: 12px solid #42444f;
    border-radius: 50%;
}

.viewcube > * {
    position: relative;
}

.north,
.south {
    grid-column: 1 / -1;
}

.viewcube button {
    width: 50px;
    height: 50px;
    background: #a6a9b2;
    color: #555861;
    font-size: 30px;
    line-height: 40px;
}

.wcs {
    position: absolute;
    top: 163px;
    right: 55px;
    width: 58px;
    height: 20px;
    padding: 0 0 0 6px;
    text-align: left;
    font-size: 13px;
    color: #62646e;
    background: #a3a5af;
    border-radius: 5px;
}

.navbar {
    position: absolute;
    top: 214px;
    right: 8px;
    width: 38px;
    height: 255px;
    background: #565a64;
    border-radius: 4px;
}

/* command line */
.command {
    display: flex;
    height: 62px;
}

.command-side {
    width: 26px;
    display: flex;
    flex-direction: column;
    align-items: center;
    justify-content: space-between;
    padding: 4px 0 1px;
    background: linear-gradient(#7a7a7a, #404040);
}

.command-side button {
    height: 18px;
}

.grip {
    width: 20px;
    height: 6px;
    background: repeating-linear-gradient(90deg, #999 0 2px, #666 2px 4px);
}

.command-main {
    flex: 1;
    font-family: "DejaVu Sans Mono", "Noto Sans CJK SC", monospace;
    color: #222;
}

.command-main p {
    height: 34px;
    padding: 13px 0 0 3px;
    background: #c5c5c8;
    border-bottom: 1px solid #888;
}

.command-main label {
    display: flex;
    align-items: center;
    gap: 4px;
    height: 28px;
    padding-left: 6px;
    background: #fcfcfc;
}

.command-main input {
    flex: 1;
}

.grey {
    color: #888;
}

/* layout tabs and status bar */
.bottom {
    display: flex;
    justify-content: space-between;
    height: 36px;
    border-top: 1px solid #5a5a5a;
}

.layout-tabs {
    display: flex;
    padding-left: 10px;
    color: #b0b0b0;
}

.layout-tabs a {
    width: 66px;
    height: 22px;
    margin-right: -4px;
    line-height: 20px;
    text-align: center;
    background: #555;
    clip-path: polygon(0 0, 100% 0, 57px 90%, 54px 100%, 12px 100%, 9px 90%);
}

.layout-tabs .active {
    color: #fff;
    font-weight: bold;
    background: #858585;
}

.layout-tabs button {
    width: 28px;
    height: 20px;
    margin-left: 8px;
    background: #505050;
    border-radius: 2px 2px 14px 10px;
}

.status {
    display: flex;
    gap: 2px;
    height: 32px;
    margin-top: 1px;
    background: #666;
}

.status > div {
    display: flex;
    align-items: center;
    gap: 9px;
    padding: 0 4px;
    background: #4b4b4b;
    border: 1px solid #6a6a6a;
}

.status button {
    display: flex;
    color: #f0f0f0;
}

.status svg {
    width: 20px;
    height: 20px;
    color: #c0c0c0;
}

.status svg.on {
    color: #2f86ec;
}

.status .slim svg {
    width: 8px;
    height: 6px;
    color: #eee;
}

.status .scale {
    width: 20px;
}

/* classic dialogs */
.dialog {
    position: absolute;
    background: #d2cecb;
    border: 2px solid;
    border-color: #f2f2f2 #6a6a6a #6a6a6a #f2f2f2;
    color: #1c1c1c;
}

.dialog button {
    text-align: center;
    background: #d2cecb;
    border: 2px solid;
    border-color: #f6f6f6 #6e6e6e #6e6e6e #f6f6f6;
}

.dialog-title {
    display: flex;
    align-items: center;
    gap: 3px;
    height: 22px;
    margin: 1px 2px 0;
    padding: 0 1px 0 4px;
    color: #fff;
}

.dialog-title > svg {
    width: 16px;
    height: 16px;
    background: #f0c0c0;
}

.dialog-title h2 {
    flex: 1;
    font-size: 15px;
    font-weight: bold;
}

.dialog-title button {
    width: 19px;
    height: 17px;
    line-height: 0;
}

.dialog-title button svg {
    width: 12px;
    height: 12px;
}

.dialog input[type="checkbox"] {
    appearance: none;
    display: grid;
    place-items: center;
    flex: none;
    width: 15px;
    height: 15px;
    background: #fff;
    border: 2px solid;
    border-color: #6e6e6e #e8e8e8 #e8e8e8 #6e6e6e;
}

.dialog input:checked::before {
    content: "";
    width: 9px;
    height: 9px;
    background: #111;
    clip-path: polygon(0 35%, 35% 65%, 100% 0, 100% 35%, 35% 100%, 0 70%);
}

.options {
    left: 533px;
    top: 224px;
    width: 853px;
    height: 635px;
}

.options .dialog-title {
    background: linear-gradient(90deg, #7c7c7c, #bcbcbc);
    color: #e8e8e8;
}

.profile {
    padding: 8px 0 0 17px;
}

.tab-heads {
    display: flex;
    padding: 7px 0 0 17px;
}

.dialog .tab-heads button {
    width: 58px;
    height: 22px;
    line-height: 17px;
    border-bottom: none;
    border-right-width: 1px;
}

.dialog .tab-heads .active {
    padding-left: 3px;
    text-align: left;
}

.tab-page {
    display: grid;
    grid-template-columns: 1fr 1fr;
    margin: 0 17px;
    padding: 12px 22px 0 13px;
    height: 507px;
    border: 2px solid;
    border-color: #f4f4f4 #6e6e6e #6e6e6e #f4f4f4;
}

fieldset {
    margin-bottom: 9px;
    padding: 1px 13px 3px;
    border: 1px solid #9a9894;
    box-shadow: inset 1px 1px #eee;
}

fieldset.tall {
    height: 300px;
    padding-top: 4px;
}

legend {
    padding: 0 1px;
    margin-left: -5px;
    line-height: 16px;
}

fieldset p,
fieldset label {
    display: flex;
    align-items: center;
    gap: 7px;
    height: 21px;
}

fieldset .spaced {
    margin-top: 5px;
}

fieldset .section {
    margin-top: 25px;
}

fieldset .indent {
    padding-left: 27px;
}

.boxes {
    display: grid;
    grid-template-rows: 127px 121px 41px 105px;
    gap: 13px;
    margin: 7px 0 0 12px;
    align-content: start;
}

.boxes i {
    border: 1px solid #9a9894;
    box-shadow: inset -1px 1px #eee, 1px 1px #eee;
}

.options .dialog-actions {
    display: flex;
    justify-content: flex-end;
    gap: 6px;
    padding: 12px 17px 0;
}

.options .dialog-actions button {
    width: 91px;
    height: 24px;
    line-height: 18px;
}

.colors {
    left: 620px;
    top: 246px;
    width: 679px;
    height: 594px;
}

.colors .dialog-title {
    background: linear-gradient(90deg, #0e256b, #14307c 30%, #a4c6ee);
}

.color-form {
    display: flex;
    gap: 19px;
    padding: 6px 13px 0 15px;
}

.lists {
    display: flex;
    gap: 15px;
}

.lists label,
.color-side > label {
    display: block;
    height: 19px;
    line-height: 16px;
    white-space: nowrap;
}

.lists select {
    display: block;
    background: #fcfcfe;
    overflow: hidden;
    scrollbar-width: none;
}

.lists .context,
.scroll-list,
.color-combo {
    border: 2px solid;
    border-color: #77757a #f0f0f0 #f0f0f0 #77757a;
}

.lists .context {
    width: 195px;
    height: 117px;
}

/* rows are tighter than the glyphs, so centre the text on each one */
.lists option {
    display: flex;
    align-items: center;
    height: 14px;
    min-height: 0;
    padding: 0 2px;
}

.lists option:nth-child(even) {
    height: 15px;
}

.lists option:checked {
    background: #0c1d66 linear-gradient(#0c1d66, #0c1d66);
    color: #dde;
}

.scroll-list {
    display: flex;
    width: 221px;
    height: 221px;
    background: #fcfcfe;
}

.scroll-list select {
    flex: 1;
    height: 217px;
}

.scrollbar {
    width: 18px;
    display: flex;
    flex-direction: column;
    background: #e4e2e0;
}

.scrollbar button {
    height: 19px;
    line-height: 0;
}

.scrollbar button:last-child {
    margin-top: auto;
}

.scrollbar svg,
.color-combo svg {
    width: 9px;
    height: 5px;
}

.scrollbar .flip {
    rotate: 180deg;
}

.scrollbar i {
    height: 127px;
    background: #d2cecb;
    border: 2px solid;
    border-color: #f6f6f6 #6e6e6e #6e6e6e #f6f6f6;
}

.color-side {
    flex: 1;
}

.color-combo {
    display: flex;
    align-items: center;
    width: 192px;
    height: 24px;
    padding-left: 4px;
    background: #fff;
}

.color-combo i {
    width: 13px;
    height: 13px;
    border: 1px solid #222;
}

.color-combo select {
    flex: 1;
    padding-left: 4px;
    appearance: none;
}

.color-combo b {
    width: 18px;
    height: 20px;
    background: #d2cecb;
    border: 2px solid;
    border-color: #f6f6f6 #6e6e6e #6e6e6e #f6f6f6;
    display: grid;
    place-items: center;
}

.color-side .tint {
    display: flex;
    align-items: center;
    gap: 6px;
    margin: 3px 0 12px;
}

.color-side button {
    display: block;
    width: 100%;
    height: 28px;
    margin-bottom: 8px;
    line-height: 22px;
}

.color-side .legacy {
    margin-top: 36px;
}

.preview {
    width: 434px;
    margin: -12px 0 0 15px;
    position: relative;
}

.preview p {
    line-height: 19px;
}

.preview svg {
    display: block;
}

.readout {
    font-family: "Liberation Mono", monospace;
    font-size: 12px;
    fill: #777;
}

.colors .dialog-actions {
    display: flex;
    justify-content: flex-end;
    gap: 6px;
    padding: 15px 13px 0;
}

.colors .dialog-actions button {
    width: 99px;
    height: 26px;
    line-height: 20px;
}

.colors .dialog-actions .default {
    width: 124px;
    border-color: #333;
}

.badge {
    position: absolute;
    top: 0;
    right: 7px;
    width: 293px;
    height: 78px;
    background: #fdfdfd;
    color: #000;
    font-family: "Noto Sans CJK SC", sans-serif;
    font-size: 45px;
    font-weight: bold;
    line-height: 66px;
    text-align: center;
    white-space: nowrap;
}

.cursor {
    position: absolute;
    left: 987px;
    top: 813px;
}
```
